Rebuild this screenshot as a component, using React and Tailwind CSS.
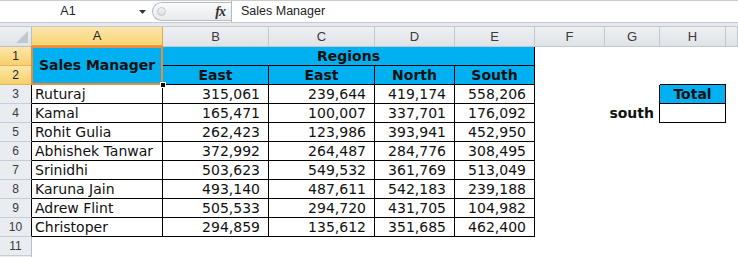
import React from 'react';

// Sheet data (rows 3-10)
const people = [
    ['Ruturaj', '315,061', '239,644', '419,174', '558,206'],
    ['Kamal', '165,471', '100,007', '337,701', '176,092'],
    ['Rohit Gulia', '262,423', '123,986', '393,941', '452,950'],
    ['Abhishek Tanwar', '372,992', '264,487', '284,776', '308,495'],
    ['Srinidhi', '503,623', '549,532', '361,769', '513,049'],
    ['Karuna Jain', '493,140', '487,611', '542,183', '239,188'],
    ['Adrew Flint', '505,533', '294,720', '431,705', '104,982'],
    ['Christoper', '294,859', '135,612', '351,685', '462,400']
];

const letters = ['A', 'B', 'C', 'D', 'E', 'F', 'G', 'H', ''];

const RowHead = ({ n, selected, dark }) => (
    <div
        className={`flex items-center justify-center border-b text-[12px] font-['Liberation_Sans',sans-serif] ${
            selected
                ? 'bg-gradient-to-b from-[#FCE6A8] to-[#F7D06A] border-[#E2B659] text-[#1f1f1f]'
                : 'bg-[#E9ECF0] border-[#C8CDD4] text-[#3a3a3a]'
        } border-r ${dark ? 'border-r-black' : selected ? 'border-r-[#E2B659]' : 'border-r-[#B9BFC7]'}`}
    >
        {n}
    </div>
);

const Blank = () => <div className="bg-white" />;

const App = () => {
    return (
        <div className="h-[257px] w-[738px] overflow-hidden bg-white">
            {/* Formula bar */}
            <div className="flex h-[22px] border-t border-[#C9CDD2] bg-white font-['Liberation_Sans',sans-serif] text-[12.5px] text-[#222]">
                <div className="relative flex w-[152px] items-center justify-center pr-[16px]">
                    <span>A1</span>
                    <svg className="absolute right-[6px] top-[9px]" width="7" height="4" viewBox="0 0 7 4">
                        <path d="M0 0H7L3.5 4Z" fill="#333" />
                    </svg>
                </div>
                <div className="mt-[1px] flex h-[19px] w-[79px] items-center justify-between rounded-l-full border border-r-0 border-[#B5BAC1] bg-gradient-to-b from-[#FBFBFC] to-[#E8EAED] pl-[4px] pr-[6px]">
                    <span className="h-[9px] w-[9px] rounded-full border border-[#C3C7CC] bg-gradient-to-b from-[#F4F5F6] to-[#D9DCE0]" />
                    <span className="font-['Liberation_Serif',serif] text-[14px] italic font-bold tracking-[-1px] text-[#333]">fx</span>
                </div>
                <div className="flex flex-1 items-center border-l border-[#B5BAC1] pl-[9px]">
                    Sales Manager
                </div>
            </div>
            <div className="h-[5px] border-y border-[#C4C9D0] bg-[#E6E9ED]" />

            {/* Sheet grid */}
            <div className="grid grid-cols-[32px_131px_106px_106px_80px_80px_70px_55px_66px_12px] grid-rows-[20px_repeat(12,19px)] font-['DejaVu_Sans',sans-serif] text-[14px] text-[#111]">
                {/* Column header row */}
                <div className="flex items-end justify-end border-r border-b border-[#B9BFC7] bg-gradient-to-b from-[#EEF0F3] to-[#DFE3E8] p-[3px]">
                    <svg width="12" height="12" viewBox="0 0 12 12">
                        <path d="M12 0V12H0Z" fill="#C3C8CE" />
                    </svg>
                </div>
                {letters.map((l, i) => (
                    <div
                        key={i}
                        className={`flex items-center justify-center border-r text-[13px] font-['Liberation_Sans',sans-serif] ${
                            i === 0
                                ? 'border-b-2 border-[#E8A33D] bg-gradient-to-b from-[#FCE6A8] to-[#F8D574] text-[#1f1f1f]'
                                : 'border-b border-[#C3C8CF] bg-gradient-to-b from-[#EEF0F3] to-[#DFE3E8] text-[#3a3a3a]'
                        }`}
                    >
                        {l}
                    </div>
                ))}

                {/* Row 1 */}
                <RowHead n={1} selected />
                <div className="relative row-span-2 flex items-center justify-center border-r border-b border-black bg-[#00B0F0] font-bold">
                    Sales Manager
                    <div className="pointer-events-none absolute -left-px -top-px bottom-[-1px] right-[-1px] border-2 border-[#EE8A3C]" />
                    <div className="absolute bottom-[-4px] right-[-4px] h-[6px] w-[6px] border border-white bg-black" />
                </div>
                <div className="col-span-4 flex items-center justify-center border-r border-b border-black bg-[#00B0F0] font-bold">
                    Regions
                </div>
                <Blank />
                <Blank />
                <Blank />
                <Blank />

                {/* Row 2 */}
                <RowHead n={2} selected />
                {['East', 'East', 'North', 'South'].map((h, i) => (
                    <div key={i} className="flex items-center justify-center border-r border-b border-black bg-[#00B0F0] font-bold">
                        {h}
                    </div>
                ))}
                <Blank />
                <Blank />
                <div className="border-b border-black bg-white" />
                <Blank />

                {/* Rows 3-10 */}
                {people.map((p, r) => (
                    <React.Fragment key={r}>
                        <RowHead n={r + 3} dark />
                        <div className="flex items-center border-r border-b border-black pl-[3px]">{p[0]}</div>
                        {p.slice(1).map((v, i) => (
                            <div key={i} className="flex items-center justify-end border-r border-b border-black pr-[8px]">
                                {v}
                            </div>
                        ))}
                        <Blank />
                        {r === 0 && (
                            <>
                                <div className="border-r border-black bg-white" />
                                <div className="flex items-center justify-center border-r border-b border-black bg-[#00B0F0] font-bold">
                                    Total
                                </div>
                            </>
                        )}
                        {r === 1 && (
                            <>
                                <div className="flex items-center justify-end border-r border-black bg-white pr-[5px] font-bold">
                                    south
                                </div>
                                <div className="border-r border-b border-black bg-white" />
                            </>
                        )}
                        {r > 1 && (
                            <>
                                <Blank />
                                <Blank />
                            </>
                        )}
                        <Blank />
                    </React.Fragment>
                ))}

                {/* Row 11 and the edge of the next one */}
                {[11, ''].map((n, k) => (
                    <React.Fragment key={k}>
                        <RowHead n={n} />
                        {letters.map((_, i) => (
                            <Blank key={i} />
                        ))}
                    </React.Fragment>
                ))}
            </div>
        </div>
    );
};

export default App;
